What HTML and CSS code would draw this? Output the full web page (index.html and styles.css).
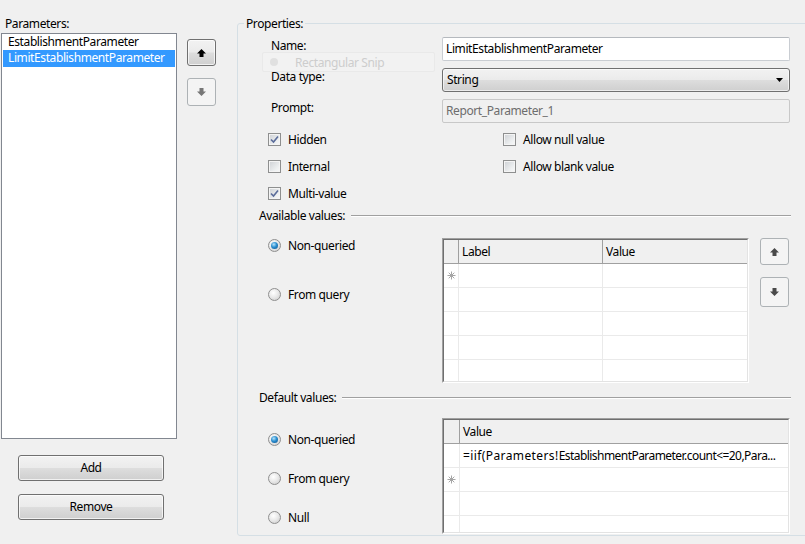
FILE: index.html
```
<!DOCTYPE html>
<html lang="en">
<head>
<meta charset="utf-8">
<title>Report Parameter Properties</title>
<link rel="stylesheet" href="styles.css">
</head>
<body>
<div class="window">
  <div class="left">
    <div class="left-label">Parameters:</div>
    <div class="listbox">
      <div class="item">EstablishmentParameter</div>
      <div class="item selected">LimitEstablishmentParameter</div>
    </div>
    <button class="wbtn add">Add</button>
    <button class="wbtn remove">Remove</button>
  </div>

  <div class="arrows">
    <button class="abtn enabled" aria-label="Move up"><svg width="9" height="8" viewBox="0 0 9 8"><path d="M4.5 0 L9 4.5 H6.5 V8 H2.5 V4.5 H0 Z" fill="#000"/></svg></button>
    <button class="abtn disabled tall" aria-label="Move down"><svg width="9" height="8" viewBox="0 0 9 8"><path d="M4.5 8 L9 3.5 H6.5 V0 H2.5 V3.5 H0 Z" fill="#777"/></svg></button>
  </div>

  <fieldset class="group">
    <legend>Properties:</legend>

    <div class="form">
      <div class="flabel">Name:</div>
      <div class="textbox">LimitEstablishmentParameter</div>
      <div class="flabel">Data type:</div>
      <div class="combo"><span>String</span><svg width="7" height="4" viewBox="0 0 7 4"><path d="M0 0 H7 L3.5 4 Z" fill="#000"/></svg></div>
      <div class="flabel">Prompt:</div>
      <div class="textbox disabled">Report_Parameter_1</div>
    </div>

    <div class="checks">
      <label class="check"><span class="cb"><svg width="11" height="11" viewBox="0 0 11 11"><path d="M2 5.5 L4.5 8 L9 2.5" fill="none" stroke="#5a6c9a" stroke-width="1.6"/></svg></span>Hidden</label>
      <label class="check"><span class="cb"></span>Allow null value</label>
      <label class="check"><span class="cb"></span>Internal</label>
      <label class="check"><span class="cb"></span>Allow blank value</label>
      <label class="check"><span class="cb"><svg width="11" height="11" viewBox="0 0 11 11"><path d="M2 5.5 L4.5 8 L9 2.5" fill="none" stroke="#5a6c9a" stroke-width="1.6"/></svg></span>Multi-value</label>
    </div>

    <div class="section-head avail-head"><span>Available values:</span><span class="rule"></span></div>

    <div class="section avail">
      <div class="radios avail-radios">
        <label class="radio"><span class="rb on"></span>Non-queried</label>
        <label class="radio"><span class="rb"></span>From query</label>
      </div>
      <div class="grid avail-grid">
        <div class="grid-inner">
          <div class="gtable three">
            <div class="hcell"></div><div class="hcell">Label</div><div class="hcell last">Value</div>
            <div class="rcell"><svg class="star" width="9" height="9" viewBox="0 0 9 9"><path d="M4.5 0.5 V8.5 M0.5 4.5 H8.5 M1.7 1.7 L7.3 7.3 M7.3 1.7 L1.7 7.3" stroke="#a5a5a5" stroke-width="1"/></svg></div><div class="cell"></div><div class="cell last"></div>
            <div class="rcell"></div><div class="cell"></div><div class="cell last"></div>
            <div class="rcell"></div><div class="cell"></div><div class="cell last"></div>
            <div class="rcell"></div><div class="cell"></div><div class="cell last"></div>
            <div class="rcell"></div><div class="cell"></div><div class="cell last"></div>
          </div>
        </div>
      </div>
      <div class="side-arrows">
        <button class="abtn flat" aria-label="Move up"><svg width="9" height="8" viewBox="0 0 9 8"><path d="M4.5 0 L9 4.5 H6.5 V8 H2.5 V4.5 H0 Z" fill="#4a4a4a"/></svg></button>
        <button class="abtn flat tall2" aria-label="Move down"><svg width="9" height="8" viewBox="0 0 9 8"><path d="M4.5 8 L9 3.5 H6.5 V0 H2.5 V3.5 H0 Z" fill="#4a4a4a"/></svg></button>
      </div>
    </div>

    <div class="section-head default-head"><span>Default values:</span><span class="rule"></span></div>

    <div class="section defaults">
      <div class="radios default-radios">
        <label class="radio"><span class="rb on"></span>Non-queried</label>
        <label class="radio"><span class="rb"></span>From query</label>
        <label class="radio"><span class="rb"></span>Null</label>
      </div>
      <div class="grid default-grid">
        <div class="grid-inner">
          <div class="gtable two">
            <div class="hcell"></div><div class="hcell last">Value</div>
            <div class="rcell"></div><div class="cell last expr"><span class="spaced">=iif(Parameters!</span>EstablishmentParameter.count&lt;=20,Para...</div>
            <div class="rcell"><svg class="star" width="9" height="9" viewBox="0 0 9 9"><path d="M4.5 0.5 V8.5 M0.5 4.5 H8.5 M1.7 1.7 L7.3 7.3 M7.3 1.7 L1.7 7.3" stroke="#a5a5a5" stroke-width="1"/></svg></div><div class="cell last"></div>
            <div class="rcell"></div><div class="cell last"></div>
            <div class="rcell"></div><div class="cell last"></div>
          </div>
        </div>
      </div>
    </div>
  </fieldset>
</div>

<div class="snip-ghost"><span class="ghost-dot"></span>Rectangular Snip</div>
</body>
</html>
```

FILE: styles.css
```
* { box-sizing: border-box; }

html, body {
  margin: 0;
  width: 805px;
  height: 544px;
  overflow: hidden;
  background: #f0f0f0;
}

body {
  font-family: "Noto Sans", "Open Sans", sans-serif;
  font-size: 12px;
  line-height: 15px;
  letter-spacing: -0.4px;
  color: #000;
  position: relative;
}

button {
  font: inherit;
  color: inherit;
  letter-spacing: inherit;
  padding: 0;
  margin: 0;
}

.window {
  display: flex;
  align-items: flex-start;
  height: 544px;
}

/* ---------- left column ---------- */
.left {
  margin-left: 1px;
  width: 176px;
  display: flex;
  flex-direction: column;
  flex-shrink: 0;
}

.left-label {
  padding: 16px 0 0 4px;
  height: 31px;
  margin-bottom: 2px;
}

.listbox {
  height: 406px;
  border: 1px solid #828790;
  background: #fff;
  padding: 0 1px;
}

.item {
  height: 16px;
  line-height: 16px;
  padding-left: 5px;
  white-space: nowrap;
}

.item.selected {
  height: 17px;
  background: #3399ff;
  color: #fff;
}

.wbtn {
  margin-left: 17px;
  width: 146px;
  height: 26px;
  border: 1px solid #707070;
  border-radius: 3px;
  background: linear-gradient(#f2f2f2 0%, #ebebeb 48%, #dddddd 52%, #cfcfcf 100%);
  box-shadow: inset 0 0 0 1px rgba(255,255,255,0.7);
  text-align: center;
  line-height: 22px;
}

.wbtn.add { margin-top: 16px; }
.wbtn.remove { margin-top: 13px; }

/* ---------- arrow buttons ---------- */
.arrows {
  margin-left: 10px;
  margin-top: 39px;
  display: flex;
  flex-direction: column;
  gap: 12px;
  flex-shrink: 0;
}

.abtn {
  width: 29px;
  height: 27px;
  border-radius: 3px;
  display: flex;
  align-items: center;
  justify-content: center;
}

.abtn.tall { height: 28px; }

.abtn.enabled {
  border: 1px solid #707070;
  background: linear-gradient(#f2f2f2 0%, #ebebeb 48%, #dddddd 52%, #cfcfcf 100%);
  box-shadow: inset 0 0 0 1px rgba(255,255,255,0.7);
}

.abtn.disabled,
.abtn.flat {
  border: 1px solid #adb2b5;
  background: #f4f4f4;
}

/* ---------- properties group ---------- */
.group {
  margin: 16px 0 0 21px;
  padding: 0;
  width: 620px;
  height: 520px;
  flex-shrink: 0;
  border: 1px solid #d5dfe5;
  border-radius: 3px;
  min-width: 0;
}

.group legend {
  margin-left: 6px;
  padding: 0 2px;
  line-height: 15px;
}

.form {
  display: grid;
  grid-template-columns: 171px 348px;
  grid-auto-rows: 24px;
  row-gap: 7px;
  margin: 6px 0 0 33px;
}

.flabel { padding-top: 1px; }

.textbox {
  border: 1px solid #c9cdd2;
  border-top-color: #b5b9be;
  border-radius: 2px;
  background: #fff;
  padding: 0 3px;
  line-height: 22px;
  white-space: nowrap;
}

.textbox.disabled {
  background: #f0f0f0;
  border-color: #c8c8c8;
  color: #6d6d6d;
}

.combo {
  border: 1px solid #707070;
  border-radius: 3px;
  background: linear-gradient(#f2f2f2 0%, #ebebeb 48%, #dddddd 52%, #cfcfcf 100%);
  box-shadow: inset 0 0 0 1px rgba(255,255,255,0.6);
  padding: 0 6px 0 4px;
  line-height: 22px;
  display: flex;
  align-items: center;
  justify-content: space-between;
}

/* ---------- check boxes ---------- */
.checks {
  display: grid;
  grid-template-columns: 235px auto;
  grid-auto-rows: 15px;
  row-gap: 12px;
  margin: 9px 0 0 30px;
}

.check {
  display: flex;
  align-items: center;
  gap: 7px;
  white-space: nowrap;
}

.cb {
  width: 13px;
  height: 13px;
  flex-shrink: 0;
  border: 1px solid #8e8f8f;
  background: linear-gradient(135deg, #cdd0d4 0%, #eef0f1 70%, #f8f8f8 100%);
  box-shadow: inset 0 0 0 1px #f4f4f4;
  display: flex;
  align-items: center;
  justify-content: center;
}

/* ---------- section headers ---------- */
.section-head {
  display: flex;
  align-items: center;
  width: 532px;
  margin-left: 21px;
  height: 15px;
}

.section-head .rule {
  flex: 1;
  margin-left: 6px;
  height: 2px;
  border-top: 1px solid #a0a0a0;
  border-bottom: 1px solid #fff;
  margin-top: 1px;
}

.avail-head { margin-top: 7px; }
.default-head { margin-top: 7px; }

.section { display: flex; align-items: flex-start; }
.avail { margin-top: 15px; }
.defaults { margin-top: 13px; }

/* ---------- radios ---------- */
.radios {
  width: 204px;
  padding-left: 30px;
  display: flex;
  flex-direction: column;
  flex-shrink: 0;
}

.avail-radios { gap: 34px; }
.default-radios { padding-top: 14px; gap: 24px; }

.radio {
  display: flex;
  align-items: center;
  gap: 7px;
  height: 15px;
  white-space: nowrap;
}

.rb {
  width: 13px;
  height: 13px;
  border-radius: 50%;
  border: 1px solid #8f8f8f;
  background: radial-gradient(circle at 40% 35%, #ffffff 0%, #eaeaea 45%, #c9c9c9 100%);
  flex-shrink: 0;
  display: flex;
  align-items: center;
  justify-content: center;
}

.rb.on::after {
  content: "";
  width: 7px;
  height: 7px;
  border-radius: 50%;
  background: radial-gradient(circle at 40% 35%, #b7e4fb 0%, #2a8ed0 45%, #0c4d86 100%);
}

/* ---------- data grids ---------- */
.grid {
  border-top: 1px solid #a0a0a0;
  border-left: 1px solid #a0a0a0;
  border-right: 1px solid #ffffff;
  border-bottom: 1px solid #ffffff;
  background: #fff;
  flex-shrink: 0;
}

.grid-inner {
  height: 100%;
  border-top: 1px solid #6f6f6f;
  border-left: 1px solid #6f6f6f;
  border-right: 1px solid #e3e3e3;
  border-bottom: 1px solid #e3e3e3;
  overflow: hidden;
  background: #fff;
}

.avail-grid { width: 307px; height: 145px; }
.default-grid { width: 348px; height: 116px; }

.gtable {
  display: grid;
  grid-template-rows: 24px;
  grid-auto-rows: 24px;
}

.gtable.three { grid-template-columns: 15px 144px 1fr; }
.gtable.two { grid-template-columns: 16px 1fr; }

.hcell {
  background: #f0f0f0;
  border-right: 1px solid #a0a0a0;
  border-bottom: 1px solid #a0a0a0;
  padding: 4px 0 0 3px;
}

.hcell.last, .cell.last { border-right: none; }

.rcell {
  border-right: 1px solid #eaeaea;
  border-bottom: 1px solid #eaeaea;
  display: flex;
  align-items: center;
  justify-content: center;
}

.cell {
  border-right: 1px solid #eaeaea;
  border-bottom: 1px solid #eaeaea;
}

.expr {
  padding: 4px 0 0 3px;
  white-space: nowrap;
  overflow: hidden;
  letter-spacing: -0.55px;
}

.spaced { letter-spacing: 0.4px; }

.side-arrows {
  margin-left: 11px;
  display: flex;
  flex-direction: column;
  gap: 12px;
}

.abtn.tall2 { height: 30px; }

/* ---------- faint screen-clip overlay ---------- */
.snip-ghost {
  position: absolute;
  left: 262px;
  top: 52px;
  width: 173px;
  height: 20px;
  border: 1px solid #e9e9e9;
  border-radius: 2px;
  background: #f2f2f2;
  color: #cdcdcd;
  display: flex;
  align-items: center;
  padding-left: 7px;
  line-height: 15px;
}

.ghost-dot {
  width: 8px;
  height: 8px;
  border-radius: 50%;
  background: #e0e0e0;
  margin-right: 17px;
}
```
